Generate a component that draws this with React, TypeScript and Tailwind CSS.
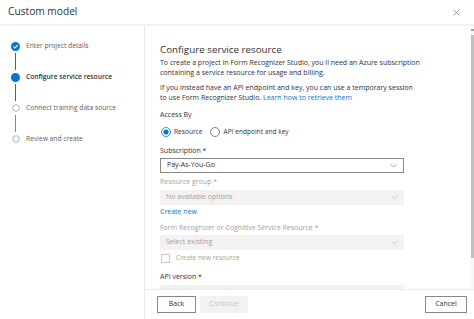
import React from "react";

const font = { fontFamily: '"Open Sans", "Noto Sans", sans-serif' };

function Chevron({ color = "#605e5c" }: { color?: string }) {
  return (
    <svg width="7" height="5" viewBox="0 0 7 5" className="shrink-0">
      <path d="M0.5 1 L3.5 4 L6.5 1" fill="none" stroke={color} strokeWidth="0.8" />
    </svg>
  );
}

function Step({
  state,
  label,
}: {
  state: "done" | "current" | "todo";
  label: string;
}) {
  return (
    <div className="flex h-[10px] items-center">
      <div className="flex w-[9px] items-center justify-center">
        {state === "done" && (
          <svg width="9" height="9" viewBox="0 0 9 9">
            <circle cx="4.5" cy="4.5" r="4.5" fill="#0078d4" />
            <path d="M2.4 4.6 L3.9 6 L6.7 3.1" fill="none" stroke="white" strokeWidth="1.1" />
          </svg>
        )}
        {state === "current" && (
          <svg width="9" height="9" viewBox="0 0 9 9">
            <circle cx="4.5" cy="4.5" r="4.5" fill="#0078d4" />
          </svg>
        )}
        {state === "todo" && (
          <svg width="8" height="8" viewBox="0 0 8 8">
            <circle cx="4" cy="4" r="3.3" fill="white" stroke="#a19f9d" strokeWidth="0.8" />
          </svg>
        )}
      </div>
      <span
        className={
          "ml-[6px] whitespace-nowrap text-[6.7px] " +
          (state === "current" ? "font-semibold text-[#323130]" : "text-[#605e5c]")
        }
      >
        {label}
      </span>
    </div>
  );
}

function Connector({ blue }: { blue: boolean }) {
  return (
    <div className="flex w-[9px] justify-center py-[2px]">
      <div className={"h-[17px] w-[1.5px] " + (blue ? "bg-[#0078d4]" : "bg-[#8a8886]")} />
    </div>
  );
}

function Label({ children, disabled }: { children: React.ReactNode; disabled?: boolean }) {
  return (
    <div
      className={
        "h-[10px] text-[7px] leading-[10px] " +
        (disabled ? "text-[#a19f9d]" : "font-medium text-[#323130]")
      }
    >
      {children}
    </div>
  );
}

function Dropdown({ text, disabled }: { text: string; disabled?: boolean }) {
  return (
    <div
      className={
        "flex h-[15px] w-[244px] items-center justify-between px-[6px] text-[7px] " +
        (disabled
          ? "bg-[#f3f2f1] text-[#a19f9d]"
          : "border border-[#8a8886] bg-white text-[#323130]")
      }
    >
      <span className="whitespace-nowrap">{text}</span>
      <Chevron color={disabled ? "#c8c6c4" : "#8a8886"} />
    </div>
  );
}

export default function App() {
  return (
    <div className="flex h-[319px] w-[474px] flex-col overflow-hidden bg-white" style={font}>
      {/* header */}
      <div className="flex h-[26px] shrink-0 items-center justify-between border-b-2 border-[#f3f2f1] pl-[8px] pr-[14px]">
        <span className="text-[10.2px] text-[#323130]">Custom model</span>
        <svg width="7" height="7" viewBox="0 0 7 7">
          <path d="M0.5 0.5 L6.5 6.5 M6.5 0.5 L0.5 6.5" stroke="#8a8886" strokeWidth="0.8" />
        </svg>
      </div>

      <div className="flex min-h-0 flex-1">
        {/* left steps */}
        <div className="w-[145px] shrink-0 border-r border-[#edebe9] pl-[11px] pt-[15px]">
          <Step state="done" label="Enter project details" />
          <Connector blue />
          <Step state="current" label="Configure service resource" />
          <Connector blue />
          <Step state="todo" label="Connect training data source" />
          <Connector blue={false} />
          <Step state="todo" label="Review and create" />
        </div>

        {/* right */}
        <div className="flex min-w-0 flex-1 flex-col">
          <div className="flex min-h-0 flex-1">
            <div className="min-w-0 flex-1 overflow-hidden pl-[15px] pt-[16px] text-[#323130]">
              <div className="text-[9.8px] leading-[15px]">Configure service resource</div>
              <div className="mt-[1px] text-[7px] leading-[10px] text-[#323130]">
                To create a project in Form Recognizer Studio, you ll need an Azure subscription
                <br />
                containing a service resource for usage and billing.
              </div>
              <div className="mt-[5px] text-[7px] leading-[10px] text-[#323130]">
                If you instead have an API endpoint and key, you can use a temporary session
                <br />
                to use Form Recognizer Studio.{" "}
                <span className="text-[#0078d4]">Learn how to retrieve them</span>
              </div>
              <div className="mt-[7px]">
                <Label>Access By</Label>
              </div>
              <div className="mt-[6px] flex h-[11px] items-center text-[6.6px]">
                <svg width="10" height="10" viewBox="0 0 10 10" className="ml-[1px]">
                  <circle cx="5" cy="5" r="4.5" fill="white" stroke="#0078d4" strokeWidth="0.8" />
                  <circle cx="5" cy="5" r="2.6" fill="#0078d4" />
                </svg>
                <span className="ml-[3px]">Resource</span>
                <svg width="10" height="10" viewBox="0 0 10 10" className="ml-[8px]">
                  <circle cx="5" cy="5" r="4.5" fill="white" stroke="#605e5c" strokeWidth="0.8" />
                </svg>
                <span className="ml-[3px]">API endpoint and key</span>
              </div>
              <div className="mt-[9px]">
                <Label>Subscription *</Label>
              </div>
              <div className="mt-[2px]">
                <Dropdown text="Pay-As-You-Go" />
              </div>
              <div className="mt-[4px]">
                <Label disabled>Resource group *</Label>
              </div>
              <div className="mt-[3px]">
                <Dropdown text="No available options" disabled />
              </div>
              <div className="mt-[2px] text-[7px] leading-[10px] text-[#0078d4]">Create new</div>
              <div className="mt-[6px]">
                <Label disabled>Form Recognizer or Cognitive Service Resource *</Label>
              </div>
              <div className="mt-[2px]">
                <Dropdown text="Select existing" disabled />
              </div>
              <div className="mt-[3px] flex h-[10px] items-center">
                <div className="ml-[1px] h-[9px] w-[9px] border border-[#c8c6c4] bg-white" />
                <span className="ml-[6px] text-[6.6px] text-[#a19f9d]">Create new resource</span>
              </div>
              <div className="mt-[9px]">
                <Label>API version *</Label>
              </div>
              <div className="mt-[3px]">
                <Dropdown text="2022-08-31 (General Availability)" disabled />
              </div>
            </div>
            {/* scrollbar */}
            <div className="flex w-[4px] shrink-0 flex-col items-center bg-[#f8f8f8] pt-[3px]">
              <div className="h-[2px] w-[3px] bg-[#a0a0a0]" />
              <div className="mt-[4px] h-[223px] w-[3px] bg-[#c1c1c1]" />
            </div>
          </div>
          {/* footer */}
          <div className="flex h-[30px] shrink-0 items-center justify-between border-t border-[#edebe9] pl-[12px] pr-[7px]">
            <div className="flex gap-[4px]">
              <div className="flex h-[17px] w-[39px] items-center justify-center border border-[#8a8886] text-[7px] font-medium text-[#323130]">
                Back
              </div>
              <div className="flex h-[17px] w-[48px] items-center justify-center bg-[#f3f2f1] text-[7px] font-medium text-[#c8c6c4]">
                Continue
              </div>
            </div>
            <div className="flex h-[17px] w-[42px] items-center justify-center border border-[#8a8886] text-[7px] font-medium text-[#323130]">
              Cancel
            </div>
          </div>
        </div>
      </div>
    </div>
  );
}
